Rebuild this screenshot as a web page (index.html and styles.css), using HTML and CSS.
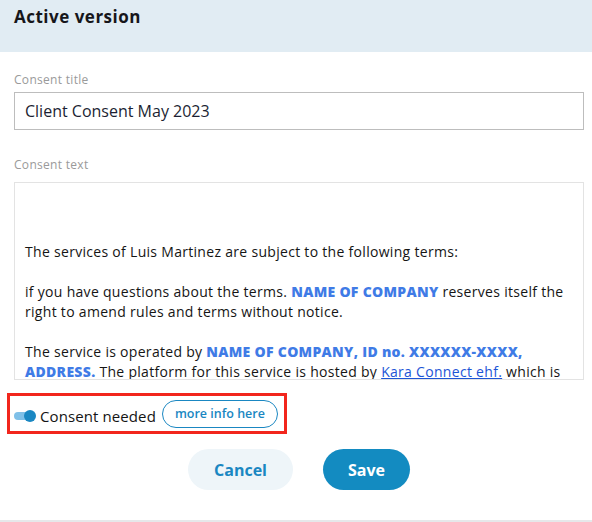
FILE: index.html
```html
<!DOCTYPE html>
<html>
<head>
<meta charset="utf-8">
<link rel="stylesheet" href="styles.css">
</head>
<body>
<div class="page">
  <header class="band">
    <h1 class="title">Active version</h1>
  </header>
  <main class="form">
    <label class="label label-title">Consent title</label>
    <div class="input">Client Consent May 2023</div>
    <label class="label label-text">Consent text</label>
    <div class="textarea">
      <p class="blank"><br></p>
      <p>The services of Luis Martinez are subject to the following terms:</p>
      <p>if you have questions about the terms. <b class="hl">NAME OF COMPANY</b> reserves itself the right to amend rules and terms without notice.</p>
      <p>The service is operated by <b class="hl">NAME OF COMPANY, ID no. XXXXXX-XXXX, ADDRESS.</b> The platform for this service is hosted by <a class="link" href="#">Kara Connect ehf.</a> which is responsible for the processing of personal data.</p>
    </div>
    <div class="consent-row">
      <span class="toggle"><span class="track"></span><span class="knob"></span></span>
      <span class="consent-label">Consent needed</span>
      <span class="pill">more info here</span>
    </div>
    <div class="actions">
      <button class="btn btn-cancel">Cancel</button>
      <button class="btn btn-save">Save</button>
    </div>
  </main>
</div>
</body>
</html>
```
FILE: styles.css
```css
* { box-sizing: border-box; }
html, body { margin: 0; padding: 0; background: #fff; }
body {
  font-family: "Open Sans", "Liberation Sans", sans-serif;
  color: #1b1b1f;
  width: 592px;
  height: 522px;
  overflow: hidden;
}
.page {
  height: 522px;
  display: flex;
  flex-direction: column;
  border-bottom: 2px solid #e6e8ea;
}
.band {
  background: #e1ecf3;
  height: 52px;
  padding: 5px 14px 0;
}
.title {
  margin: 0;
  font-size: 17px;
  font-weight: 700;
  line-height: 24px;
  letter-spacing: 0.5px;
  color: #16161a;
}
.form {
  padding: 20px 8px 0 14px;
  display: flex;
  flex-direction: column;
  flex: 1;
}
.label {
  display: block;
  font-size: 12px;
  line-height: 16px;
  letter-spacing: 0.3px;
  color: #9a9a9a;
}
.label-title { margin-bottom: 4px; }
.label-text { margin-top: 27px; margin-bottom: 9px; }
.input {
  height: 38px;
  border: 1px solid #bdbdbd;
  padding: 0 10px;
  font-size: 16px;
  line-height: 36px;
  color: #1c1f33;
}
.textarea {
  height: 198px;
  border: 1px solid #e3e3e3;
  padding: 19px 10px 0 10px;
  overflow: hidden;
  font-size: 14px;
  line-height: 20px;
  letter-spacing: 0.3px;
  color: #151515;
}
.textarea p { margin: 0 0 20px; }
.hl { color: #3f7be6; font-weight: 800; }
.link { color: #1d55d6; text-decoration: underline; }
.consent-row {
  margin-top: 13px;
  margin-left: -7px;
  width: 280px;
  height: 41px;
  border: 3px solid #f2261d;
  display: flex;
  align-items: center;
  padding-left: 4px;
}
.toggle {
  position: relative;
  width: 22px;
  height: 12px;
  margin-top: 4px;
  margin-right: 4px;
  flex: none;
}
.track {
  position: absolute;
  left: 0;
  top: 2px;
  width: 17px;
  height: 8px;
  border-radius: 4px;
  background: #7fc0e8;
}
.knob {
  position: absolute;
  left: 10px;
  top: 0;
  width: 12px;
  height: 12px;
  border-radius: 50%;
  background: #1a87c2;
}
.consent-label {
  font-size: 15px;
  letter-spacing: 0.1px;
  color: #141414;
  margin-top: 5px;
}
.pill {
  margin-left: 6px;
  height: 28px;
  padding: 0 12px;
  border: 1px solid #1a87c2;
  border-radius: 14px;
  color: #1a87c2;
  font-size: 12.5px;
  font-weight: 600;
  display: flex;
  align-items: center;
}
.actions {
  display: flex;
  justify-content: center;
  gap: 30px;
  margin-top: 15px;
}
.btn {
  height: 41px;
  border: none;
  border-radius: 21px;
  font-family: inherit;
  font-size: 16px;
  font-weight: 700;
  padding: 0;
}
.btn-cancel {
  width: 105px;
  background: #eef5f9;
  color: #1a87c2;
}
.btn-save {
  width: 87px;
  background: #138bc1;
  color: #fff;
}
```
